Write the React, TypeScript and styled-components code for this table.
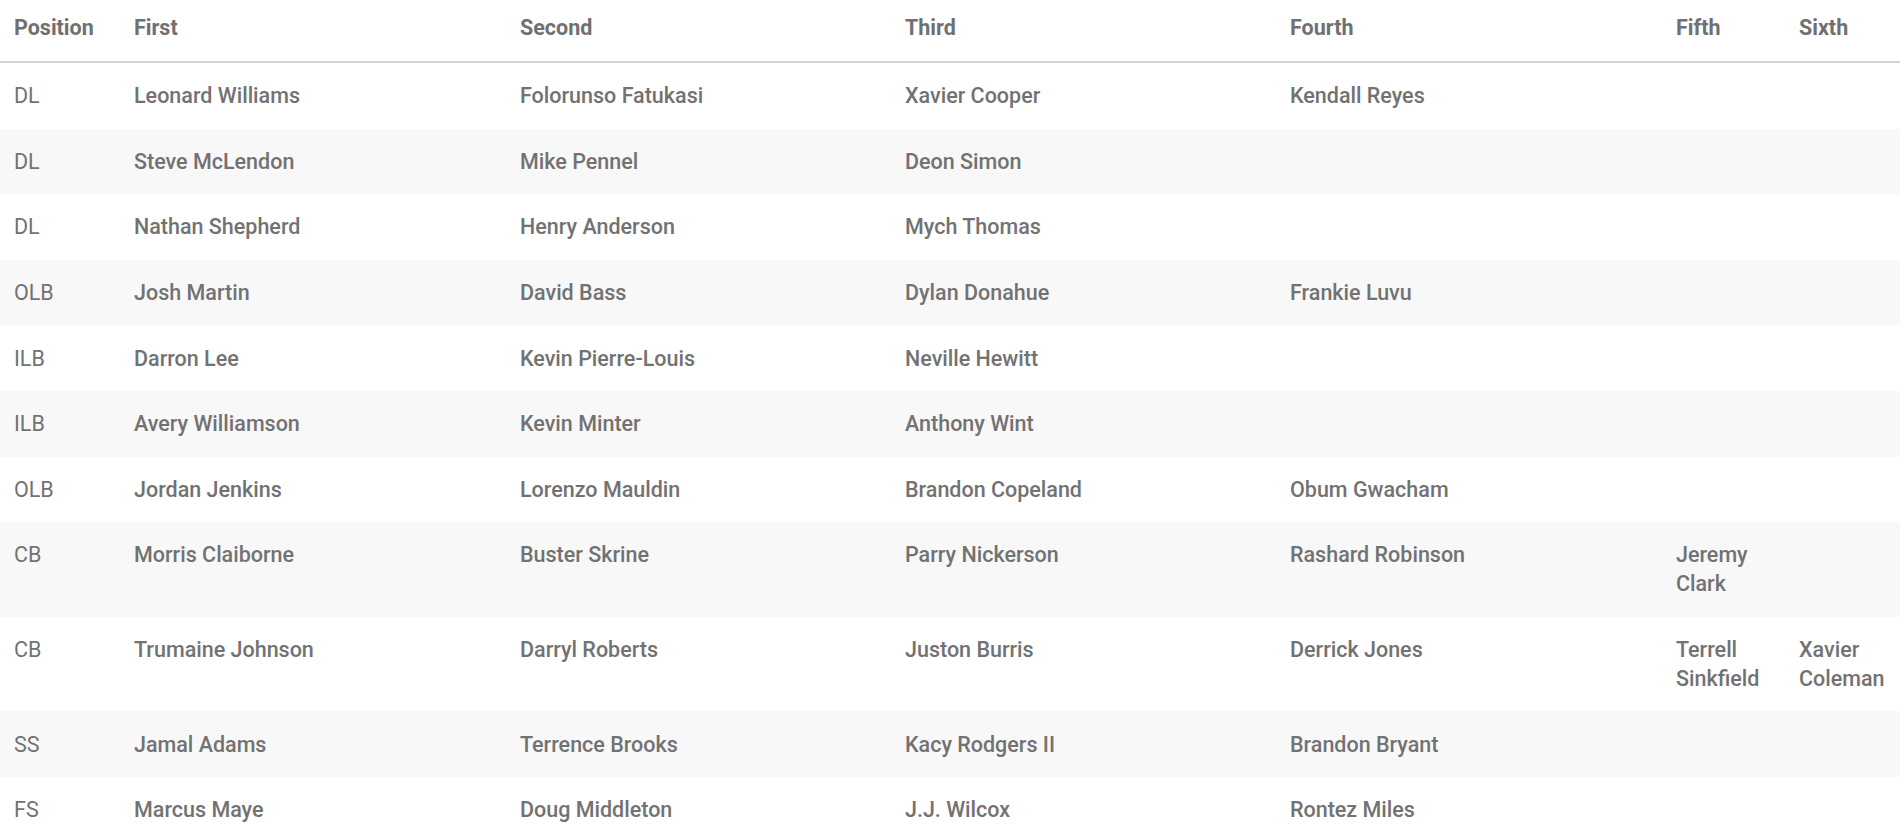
import React from "react";
import styled, { createGlobalStyle } from "styled-components";

const GlobalStyle = createGlobalStyle`
  html, body {
    margin: 0;
    padding: 0;
    background: #ffffff;
  }
  body {
    font-family: Roboto, "Liberation Sans", sans-serif;
    color: #717171;
  }
`;

type DepthRow = {
  position: string;
  players: string[];
};

const columns = [
  { label: "Position", width: 120 },
  { label: "First", width: 386 },
  { label: "Second", width: 385 },
  { label: "Third", width: 385 },
  { label: "Fourth", width: 386 },
  { label: "Fifth", width: 123 },
  { label: "Sixth", width: 115 },
];

const rows: DepthRow[] = [
  { position: "DL", players: ["Leonard Williams", "Folorunso Fatukasi", "Xavier Cooper", "Kendall Reyes"] },
  { position: "DL", players: ["Steve McLendon", "Mike Pennel", "Deon Simon"] },
  { position: "DL", players: ["Nathan Shepherd", "Henry Anderson", "Mych Thomas"] },
  { position: "OLB", players: ["Josh Martin", "David Bass", "Dylan Donahue", "Frankie Luvu"] },
  { position: "ILB", players: ["Darron Lee", "Kevin Pierre-Louis", "Neville Hewitt"] },
  { position: "ILB", players: ["Avery Williamson", "Kevin Minter", "Anthony Wint"] },
  { position: "OLB", players: ["Jordan Jenkins", "Lorenzo Mauldin", "Brandon Copeland", "Obum Gwacham"] },
  { position: "CB", players: ["Morris Claiborne", "Buster Skrine", "Parry Nickerson", "Rashard Robinson", "Jeremy Clark"] },
  { position: "CB", players: ["Trumaine Johnson", "Darryl Roberts", "Juston Burris", "Derrick Jones", "Terrell Sinkfield", "Xavier Coleman"] },
  { position: "SS", players: ["Jamal Adams", "Terrence Brooks", "Kacy Rodgers II", "Brandon Bryant"] },
  { position: "FS", players: ["Marcus Maye", "Doug Middleton", "J.J. Wilcox", "Rontez Miles"] },
];

const DepthTable = styled.table`
  width: 1900px;
  table-layout: fixed;
  border-collapse: collapse;
  border-spacing: 0;
  font-size: 21.5px;
  line-height: 29px;
`;

const HeadCell = styled.th`
  text-align: left;
  font-weight: 700;
  color: #707070;
  padding: 13px 14px 19px 14px;
  border-bottom: 2px solid #d4d4d4;
  vertical-align: top;
`;

const BodyRow = styled.tr<{ $striped: boolean }>`
  background: ${(p) => (p.$striped ? "#f8f8f8" : "#ffffff")};
`;

const Cell = styled.td<{ $position?: boolean }>`
  padding: 18.3px 14px;
  vertical-align: top;
  font-weight: ${(p) => (p.$position ? 400 : 500)};
  color: #727272;
  word-wrap: break-word;
`;

export default function App() {
  return (
    <>
      <GlobalStyle />
      <DepthTable>
        <colgroup>
          {columns.map((c) => (
            <col key={c.label} style={{ width: c.width }} />
          ))}
        </colgroup>
        <thead>
          <tr>
            {columns.map((c) => (
              <HeadCell key={c.label}>{c.label}</HeadCell>
            ))}
          </tr>
        </thead>
        <tbody>
          {rows.map((row, i) => (
            <BodyRow key={i} $striped={i % 2 === 1}>
              <Cell $position>{row.position}</Cell>
              {columns.slice(1).map((c, j) => (
                <Cell key={c.label}>{row.players[j] ?? ""}</Cell>
              ))}
            </BodyRow>
          ))}
        </tbody>
      </DepthTable>
    </>
  );
}
